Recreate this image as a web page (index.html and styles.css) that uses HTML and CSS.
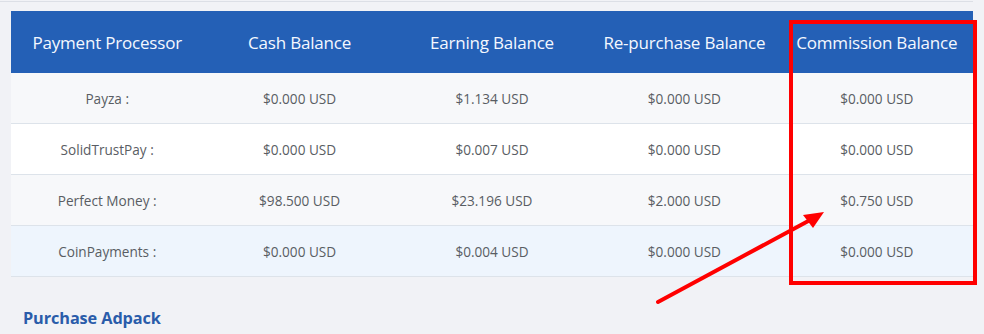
FILE: index.html
```html
<!DOCTYPE html>
<html>
<head>
<meta charset="utf-8">
<link rel="stylesheet" href="styles.css">
</head>
<body>
<div class="page">
  <div class="top-rule"></div>
  <div class="content">
    <table class="balances">
      <thead>
        <tr>
          <th>Payment Processor</th>
          <th>Cash Balance</th>
          <th>Earning Balance</th>
          <th>Re-purchase Balance</th>
          <th>Commission Balance</th>
        </tr>
      </thead>
      <tbody>
        <tr class="odd">
          <td>Payza :</td><td>$0.000 USD</td><td>$1.134 USD</td><td>$0.000 USD</td><td>$0.000 USD</td>
        </tr>
        <tr class="even">
          <td>SolidTrustPay :</td><td>$0.000 USD</td><td>$0.007 USD</td><td>$0.000 USD</td><td>$0.000 USD</td>
        </tr>
        <tr class="odd">
          <td>Perfect Money :</td><td>$98.500 USD</td><td>$23.196 USD</td><td>$2.000 USD</td><td>$0.750 USD</td>
        </tr>
        <tr class="hover">
          <td>CoinPayments :</td><td>$0.000 USD</td><td>$0.004 USD</td><td>$0.000 USD</td><td>$0.000 USD</td>
        </tr>
      </tbody>
    </table>
    <h3 class="section-title">Purchase Adpack</h3>
  </div>
  <svg class="annotation" width="984" height="334" viewBox="0 0 984 334">
    <rect x="791" y="21" width="184" height="261" fill="none" stroke="#f00" stroke-width="4"/>
    <line x1="658" y1="301" x2="812" y2="218" stroke="#f00" stroke-width="4" stroke-linecap="round"/>
    <polygon points="824,211 803,214 813,227" fill="#f00"/>
  </svg>
</div>
</body>
</html>
```

FILE: styles.css
```css
html, body {
  margin: 0;
  padding: 0;
}
body {
  background: #f1f2f6;
  font-family: "Open Sans", "Noto Sans", sans-serif;
  width: 984px;
  height: 334px;
  overflow: hidden;
}
.page {
  position: relative;
  width: 984px;
  height: 334px;
}
.top-rule {
  margin-top: 1px;
  width: 973px;
  height: 1px;
  background: #dcdfe6;
}
.content {
  padding: 9px 0 0 11px;
}
.balances {
  width: 962px;
  border-collapse: collapse;
  table-layout: fixed;
}
.balances th {
  background: #2460b6;
  color: #f4f8ff;
  font-weight: 400;
  font-size: 17px;
  height: 62px;
  padding: 0;
  text-align: center;
  letter-spacing: -0.2px;
}
.balances td {
  height: 50px;
  padding: 0;
  text-align: center;
  font-size: 13.6px;
  color: #595d63;
  border-bottom: 1px solid #dde3ea;
}
.balances tr.odd td {
  background: #f7f8fa;
}
.balances tr.even td {
  background: #ffffff;
}
.balances tr.hover td {
  background: #eef5fd;
}
.section-title {
  margin: 30px 0 0 12px;
  font-size: 16.3px;
  font-weight: 700;
  color: #2a5caa;
  letter-spacing: -0.1px;
}
.annotation {
  position: absolute;
  left: 0;
  top: 0;
  pointer-events: none;
}
```
